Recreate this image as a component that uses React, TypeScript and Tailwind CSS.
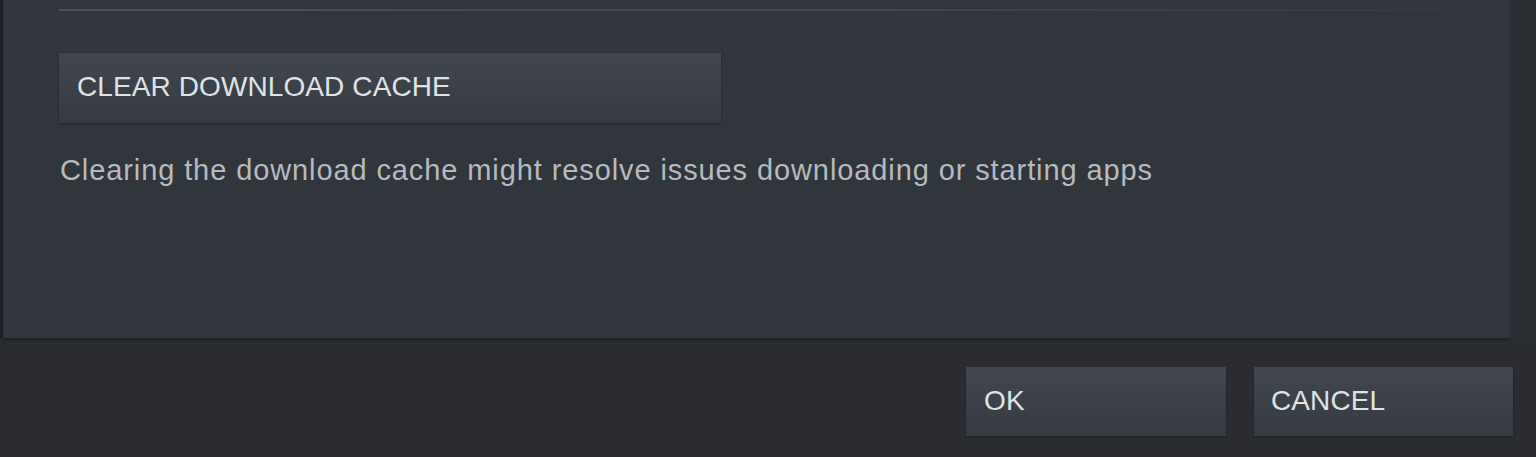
import React from 'react'

const font = { fontFamily: '"Liberation Sans", Arial, sans-serif' }

const Button = ({ label, className }: { label: string; className: string }) => (
  <button
    className={`flex items-center bg-gradient-to-b from-[#42474f] to-[#363a41] text-[#dfe3e6] text-[28px] tracking-[0.1px] shadow-[0_1px_2px_rgba(0,0,0,0.35)] ${className}`}
  >
    {label}
  </button>
)

export default function App() {
  return (
    <div className="w-[1536px] h-[457px] bg-[#2a2c31] overflow-hidden flex flex-col" style={font}>
      <div className="flex h-[338px]">
        <div className="w-[3px] bg-[#1f2228]" />
        <div className="w-[1507px] bg-[#31353c] shadow-[0_2px_3px_rgba(0,0,0,0.3)] pl-[56px] flex flex-col">
          <div className="mt-[9px] h-[2px] w-[1392px] bg-gradient-to-r from-[#4b5058] via-[#454a52] to-[#343840]" />
          <Button label="CLEAR DOWNLOAD CACHE" className="mt-[42px] w-[662px] h-[70px] pl-[18px] pb-[2px]" />
          <p className="mt-[30px] ml-[1px] text-[29px] tracking-[0.9px] text-[#b6babe] leading-[34px]">
            Clearing the download cache might resolve issues downloading or starting apps
          </p>
        </div>
        <div className="flex-1 bg-[#2b2e33]" />
      </div>
      <div className="flex justify-end gap-[28px] pr-[23px] mt-[29px]">
        <Button label="OK" className="w-[260px] h-[69px] pl-[18px] pb-[2px]" />
        <Button label="CANCEL" className="w-[259px] h-[69px] pl-[17px] pb-[2px]" />
      </div>
    </div>
  )
}
